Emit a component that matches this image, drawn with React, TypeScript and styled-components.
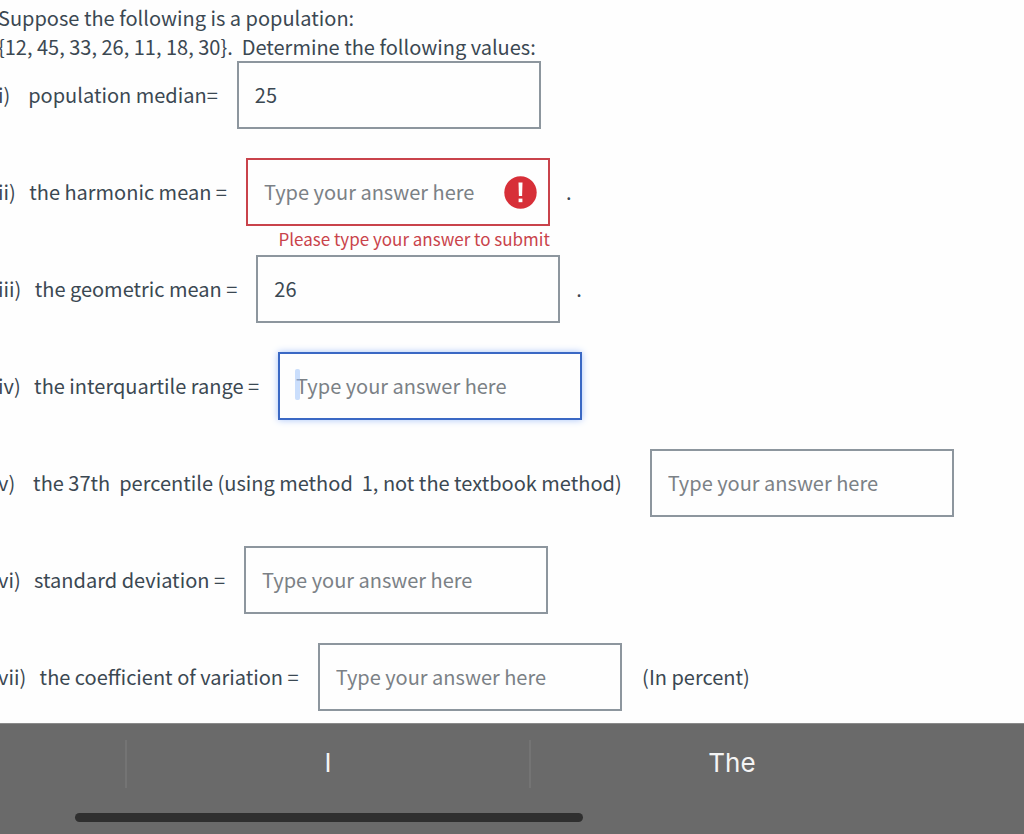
import React, { useState } from "react";
import styled, { createGlobalStyle, css } from "styled-components";

const GlobalStyle = createGlobalStyle`
  *, *::before, *::after { box-sizing: border-box; }
  body {
    margin: 0;
    background: #fefefe;
    color: #3b4852;
    font-family: "Source Sans Pro", "Noto Sans CJK SC", sans-serif;
    font-size: 20px;
    overflow-x: hidden;
  }
`;

const Page = styled.div`
  display: flex;
  flex-direction: column;
  min-height: 100vh;
`;

const Question = styled.main`
  margin-left: -2px;
  padding-top: 3px;
`;

const Prompt = styled.p`
  margin: 0;
  line-height: 29px;
  white-space: pre-wrap;
`;

const Parts = styled.form`
  display: flex;
  flex-direction: column;
`;

const Row = styled.div`
  display: flex;
  align-items: flex-start;
  min-height: 97px;

  &:last-child {
    min-height: 80px;
  }
`;

const Label = styled.label`
  padding-right: 19px;
  line-height: 68px;
  white-space: pre;
`;

const Suffix = styled.span`
  padding-left: 16px;
  line-height: 68px;
`;

const Field = styled.div`
  position: relative;
  display: flex;
  flex-direction: column;
  width: 304px;
`;

type Tone = "plain" | "error" | "active";

const Answer = styled.input<{ $tone: Tone }>`
  width: 100%;
  height: 68px;
  padding: 0 16px 2px;
  border: 2px solid #8d969e;
  border-radius: 0;
  background: #fefefe;
  color: #3b4852;
  font: inherit;
  outline: none;

  &::placeholder {
    color: #7b8186;
    opacity: 1;
  }

  ${({ $tone }) =>
    $tone === "error" &&
    css`
      border-color: #c9434b;
    `}
  ${({ $tone }) =>
    $tone === "active" &&
    css`
      border-color: #3a68c4;
      box-shadow: 0 0 7px #a9c4fa;
    `}
`;

const Handle = styled.span`
  position: absolute;
  top: 17px;
  left: 17px;
  width: 5px;
  height: 31px;
  border-radius: 2px;
  background: rgba(150, 190, 250, 0.5);
  pointer-events: none;
`;

const AlertIcon = styled.svg`
  position: absolute;
  top: 18px;
  right: 13px;
  width: 33px;
  height: 33px;
`;

const Message = styled.span`
  color: #c9434b;
  font-size: 17px;
  line-height: 26px;
  text-align: right;
  white-space: nowrap;
`;

const Keyboard = styled.footer`
  flex: 1 0 auto;
  padding: 16px 0 12px;
  background: #6a6a6a;
  border-top: 1px solid #8a8a8a;
`;

const Suggestions = styled.div`
  display: grid;
  grid-template-columns: 125fr 404fr 404fr 91fr;
  height: 48px;
`;

const Suggestion = styled.button`
  padding: 0 0 4px;
  border: 0;
  border-left: 2px solid #747474;
  background: none;
  color: #f4f4f4;
  font-family: Inter, sans-serif;
  font-size: 26px;
`;

const HomeBar = styled.div`
  width: 50%;
  max-width: 508px;
  height: 9px;
  margin: 25px 0 0 75px;
  border-radius: 5px;
  background: #2f2f2f;
`;

interface Part {
  id: string;
  label: string;
  value?: string;
  suffix?: string;
  tone?: Tone;
  message?: string;
}

const parts: Part[] = [
  { id: "median", label: "i)\u00a0\u00a0\u00a0 population median=", value: "25" },
  {
    id: "harmonic",
    label: "ii)\u00a0\u00a0 the harmonic mean =",
    suffix: ".",
    tone: "error",
    message: "Please type your answer to submit",
  },
  { id: "geometric", label: "iii)\u00a0\u00a0 the geometric mean =", value: "26", suffix: "." },
  { id: "iqr", label: "iv)\u00a0\u00a0 the interquartile range =", tone: "active" },
  {
    id: "percentile",
    label:
      "v)\u00a0\u00a0\u00a0 the 37th\u00a0 percentile (using method\u00a0 1, not the textbook method)\u00a0 ",
  },
  { id: "deviation", label: "vi)\u00a0\u00a0 standard deviation =" },
  { id: "variation", label: "vii)\u00a0\u00a0 the coefficient of variation =", suffix: "\u00a0(In percent)" },
];

function AnswerRow({ id, label, value = "", suffix, tone = "plain", message }: Part) {
  const [answer, setAnswer] = useState(value);
  return (
    <Row>
      <Label htmlFor={id}>{label}</Label>
      <Field>
        <Answer
          id={id}
          type="text"
          autoComplete="off"
          placeholder="Type your answer here"
          value={answer}
          onChange={(e) => setAnswer(e.target.value)}
          $tone={tone}
          aria-invalid={tone === "error"}
          aria-describedby={message ? `${id}-message` : undefined}
        />
        {tone === "active" && <Handle />}
        {tone === "error" && (
          <AlertIcon viewBox="0 0 33 33" aria-hidden="true">
            <circle cx="16.5" cy="16.5" r="16.2" fill="#d72f38" />
            <path d="M14.5 6.6h4l-.4 13.4h-3.2z" fill="#fff" />
            <rect x="14.6" y="22.6" width="3.8" height="3.6" fill="#fff" />
          </AlertIcon>
        )}
        {message && <Message id={`${id}-message`}>{message}</Message>}
      </Field>
      {suffix && <Suffix>{suffix}</Suffix>}
    </Row>
  );
}

export default function App() {
  return (
    <>
      <GlobalStyle />
      <Page>
        <Question>
          <Prompt>Suppose the following is a population:</Prompt>
          <Prompt>{"{12, 45, 33, 26, 11, 18, 30}.\u00a0 Determine the following values:"}</Prompt>
          <Parts>
            {parts.map((part) => (
              <AnswerRow key={part.id} {...part} />
            ))}
          </Parts>
        </Question>
        <Keyboard>
          <Suggestions>
            <span />
            <Suggestion type="button">I</Suggestion>
            <Suggestion type="button">The</Suggestion>
            <span />
          </Suggestions>
          <HomeBar />
        </Keyboard>
      </Page>
    </>
  );
}
